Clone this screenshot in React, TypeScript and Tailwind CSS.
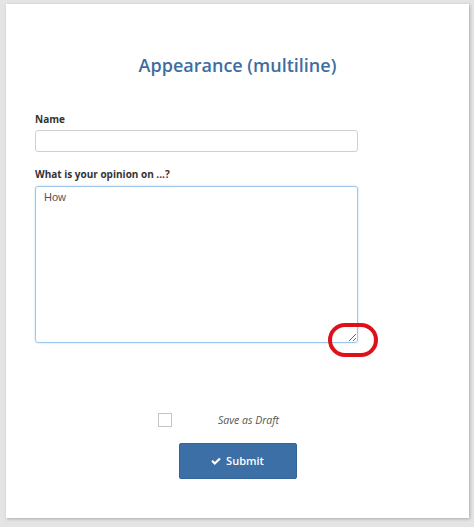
import { useState } from 'react';

const font = { fontFamily: '"Open Sans", "Liberation Sans", sans-serif' };

const App = () => {
    const [draft, setDraft] = useState(false);

    return (
        <div className="h-[527px] w-[474px] bg-[#e4e4e4] pl-[6px] pr-[5px] pt-[4px] pb-[9px]" style={font}>
            <div className="flex h-full flex-col bg-white shadow-[1px_1px_3px_rgba(0,0,0,0.25)]">
                <h1 className="mt-[48px] text-center text-[18px] leading-[26px] font-semibold text-[#3d6e9f]">
                    Appearance (multiline)
                </h1>

                <form className="flex flex-col pl-[29px]" onSubmit={(e) => e.preventDefault()}>
                    <label className="mt-[33px] text-[10px] leading-[16px] font-bold text-[#333]">Name</label>
                    <input
                        type="text"
                        className="mt-[3px] h-[22px] w-[323px] rounded-[3px] border border-[#d0d0d0] px-2 text-[11px] outline-none"
                    />

                    <label className="mt-[14px] text-[10px] leading-[16px] font-bold text-[#333]">
                        What is your opinion on ...?
                    </label>
                    <div className="relative mt-[4px] w-[323px]">
                        <textarea
                            defaultValue="How"
                            className="block h-[157px] w-[323px] resize rounded-[3px] border border-[#9ec6ea] px-[8px] py-[2px] text-[11px] leading-[16px] text-[#555] shadow-[0_0_2px_rgba(102,175,233,0.5)] outline-none"
                            style={{ fontFamily: '"Liberation Sans", Arial, sans-serif' }}
                        />
                        {/* annotation circle around the resize grip */}
                        <div className="pointer-events-none absolute left-[293px] top-[137px] h-[34px] w-[50px] rounded-full border-[4px] border-[#e0101a]" />
                    </div>
                </form>

                <div className="mt-[69px] flex items-center pl-[152px]">
                    <button
                        type="button"
                        onClick={() => setDraft(!draft)}
                        className="h-[14px] w-[14px] border border-[#c4c4c4] bg-white text-[10px] leading-none text-[#3d6e9f]"
                    >
                        {draft ? '✔' : ''}
                    </button>
                    <span className="ml-[46px] text-[10.5px] leading-[16px] italic text-[#555]">Save as Draft</span>
                </div>

                <button
                    type="submit"
                    className="mx-auto mt-[15px] flex h-[36px] w-[118px] items-center justify-center gap-[5px] rounded-[2px] border border-[#33649a] bg-[#3c6fa6] text-[11px] font-semibold text-white"
                >
                    <svg width="10" height="9" viewBox="0 0 10 9" fill="white">
                        <path d="M0.3 4.6 L1.8 3.1 L3.8 5.1 L8.2 0.7 L9.7 2.2 L3.8 8.1 Z" />
                    </svg>
                    Submit
                </button>
            </div>
        </div>
    );
};

export default App;
